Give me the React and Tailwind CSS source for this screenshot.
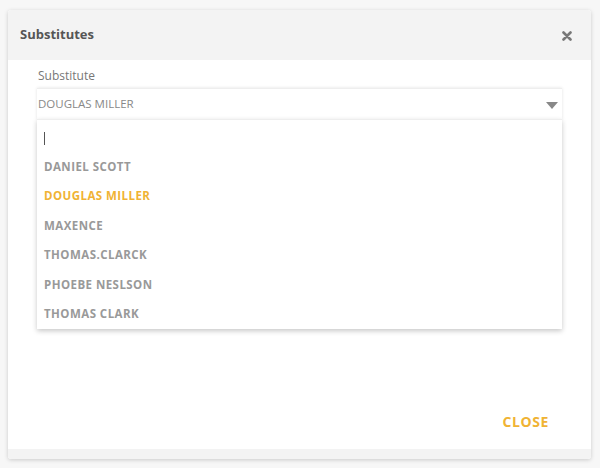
import React, { useState } from "react";

const people = [
  "DANIEL SCOTT",
  "DOUGLAS MILLER",
  "MAXENCE",
  "THOMAS.CLARCK",
  "PHOEBE NESLSON",
  "THOMAS CLARK",
];

const SubstitutesModal = () => {
  const [selected, setSelected] = useState("DOUGLAS MILLER");

  return (
    <div
      className="w-[600px] h-[468px] bg-[#f7f7f7] pt-[10px] pl-[8px] pr-[9px] pb-[9px]"
      style={{ fontFamily: '"Open Sans", "Liberation Sans", sans-serif' }}
    >
      <div className="h-full flex flex-col bg-white rounded-[3px] shadow-[0_1px_4px_rgba(0,0,0,0.18)] overflow-hidden">
        {/* Header */}
        <div className="h-[50px] shrink-0 bg-[#f3f3f3] flex items-center justify-between pl-[12px] pr-[19px]">
          <h2 className="text-[13px] font-bold text-[#555]">Substitutes</h2>
          <svg width="10" height="10" viewBox="0 0 10 10" className="mt-[1px]">
            <path d="M1.5 1.5 L8.5 8.5 M8.5 1.5 L1.5 8.5" stroke="#777" strokeWidth="2.6" strokeLinecap="round" />
          </svg>
        </div>

        {/* Body */}
        <div className="flex-1 relative pl-[29px] pr-[29px] pt-[8px]">
          <label className="block text-[12px] text-[#777] leading-[16px] ml-[1px]">Substitute</label>
          <div className="mt-[4px] relative">
            <div className="h-[31px] flex items-center justify-between bg-white border-t border-[#eee] shadow-[0_0_3px_rgba(0,0,0,0.12)] pr-[4px]">
              <span className="text-[11.5px] text-[#888] pl-[1px]">{selected}</span>
              <svg width="12" height="7" viewBox="0 0 12 7" className="mt-[2px]">
                <path d="M0 0 H12 L6 7 Z" fill="#888" />
              </svg>
            </div>

            {/* Dropdown */}
            <div className="absolute left-0 right-0 top-[31px] bg-white border-t border-[#eee] shadow-[0_2px_5px_rgba(0,0,0,0.22)] pb-[1px] z-10">
              <div className="h-[30px] flex items-center pl-[7px]">
                <span className="w-[1px] h-[13px] bg-[#555] mt-[6px]"></span>
              </div>
              <ul className="pt-[2px]">
                {people.map((name) => (
                  <li
                    key={name}
                    onClick={() => setSelected(name)}
                    className={
                      "h-[29.4px] flex items-center pl-[7px] text-[11.5px] font-bold tracking-[0.45px] cursor-pointer " +
                      (name === selected ? "text-[#f0b334]" : "text-[#999]")
                    }
                  >
                    {name}
                  </li>
                ))}
              </ul>
            </div>
          </div>

          <div className="absolute right-[42px] bottom-[16px]">
            <button className="text-[14px] font-bold tracking-[0.6px] text-[#f0b334]">CLOSE</button>
          </div>
        </div>

        {/* Footer strip */}
        <div className="h-[10px] shrink-0 bg-[#f3f3f3]"></div>
      </div>
    </div>
  );
};

export default function App() {
  return <SubstitutesModal />;
}
